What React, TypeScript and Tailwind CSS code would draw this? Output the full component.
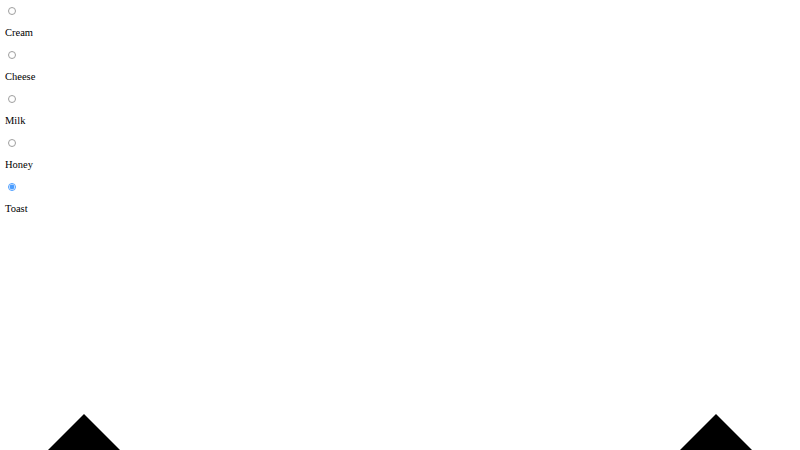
import { useState } from "react";

const items = ["Cream", "Cheese", "Milk", "Honey", "Toast"];

export default function App() {
  const [picked, setPicked] = useState("Toast");

  return (
    <div className="h-[450px] overflow-hidden flex flex-col bg-white text-black font-['Liberation_Serif',serif] text-[10.5px]">
      <div className="flex flex-col">
        {items.map((item) => (
          <div key={item} className="h-[44px] pt-[7px]">
            <input
              type="radio"
              name="food"
              id={item}
              checked={picked === item}
              onChange={() => setPicked(item)}
              className="block m-0 ml-[8px] w-[8px] h-[8px] opacity-70"
            />
            <label htmlFor={item} className="block mt-[12px] ml-[5px] leading-[12px]">
              {item}
            </label>
          </div>
        ))}
      </div>
      <div className="mt-auto flex justify-between px-[48px]">
        <div className="w-0 h-0 border-l-[36px] border-r-[36px] border-b-[36px] border-l-transparent border-r-transparent border-b-black" />
        <div className="w-0 h-0 border-l-[36px] border-r-[36px] border-b-[36px] border-l-transparent border-r-transparent border-b-black" />
      </div>
    </div>
  );
}
